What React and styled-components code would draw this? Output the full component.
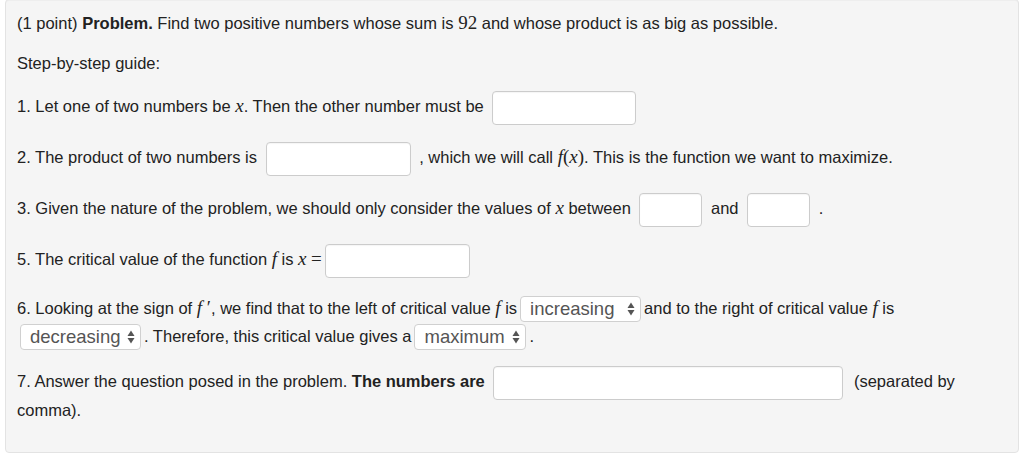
import styled, { createGlobalStyle } from 'styled-components';

const GlobalStyle = createGlobalStyle`
  body {
    margin: 0;
    background: #ffffff;
    font-family: "Liberation Sans", Arial, sans-serif;
    font-size: 16.5px;
    color: #222222;
  }
`;

const Page = styled.div`
  padding: 0 5px 0 5px;
`;

const Panel = styled.div`
  margin-top: -1px;
  padding: 13px 12px 13px 11px;
  background: #f5f5f5;
  border: 1px solid #e3e3e3;
  border-radius: 4px;
  box-shadow: inset 0 1px 1px rgba(0, 0, 0, 0.03);
`;

const Para = styled.p`
  margin: 0 0 ${props => props.$gap || 17}px;
  line-height: 20px;

  &:last-child {
    margin-bottom: 19px;
  }
`;

const Mathv = styled.span`
  font-family: "Liberation Serif", "Times New Roman", serif;
  font-style: ${props => (props.$upright ? 'normal' : 'italic')};
  font-size: 19px;
  line-height: 1;
`;

const Answer = styled.input`
  box-sizing: border-box;
  width: ${props => props.$w}px;
  height: 34px;
  margin: 0 ${props => (props.$mr === undefined ? 4 : props.$mr)}px 0
    ${props => (props.$ml === undefined ? 4 : props.$ml)}px;
  padding: 6px 12px;
  vertical-align: middle;
  background: #ffffff;
  border: 1px solid #cccccc;
  border-radius: 4px;
  font: inherit;
  box-shadow: inset 0 1px 1px rgba(0, 0, 0, 0.04);
`;

const SelectWrap = styled.span`
  position: relative;
  display: inline-block;
  vertical-align: middle;
  margin: 0 3px;
`;

const Select = styled.select`
  appearance: none;
  -webkit-appearance: none;
  box-sizing: border-box;
  width: ${props => props.$w}px;
  height: 26px;
  padding: 0 12px 0 9px;
  background: #ffffff;
  border: 1px solid #d0d0d0;
  border-radius: 4px;
  font-family: "Liberation Sans", Arial, sans-serif;
  font-size: 18.5px;
  color: #555555;
  line-height: 24px;
`;

const Arrows = styled.svg`
  position: absolute;
  right: 6px;
  top: 6px;
  pointer-events: none;
`;

const Dropdown = ({ w, value, options }) => (
  <SelectWrap>
    <Select $w={w} defaultValue={value}>
      {options.map(o => (
        <option key={o}>{o}</option>
      ))}
    </Select>
    <Arrows width="8" height="14" viewBox="0 0 8 14">
      <path d="M4 0.5 L7.5 6 L0.5 6 Z" fill="#555555" />
      <path d="M4 13.5 L7.5 8 L0.5 8 Z" fill="#555555" />
    </Arrows>
  </SelectWrap>
);

const TightLine = styled.span`
  line-height: 27px;
`;

export default function App() {
  return (
    <>
      <GlobalStyle />
      <Page>
        <Panel>
          <Para $gap={20}>
            (1 point) <b>Problem.</b> Find two positive numbers whose sum is{' '}
            <Mathv $upright>92</Mathv> and whose product is as big as possible.
          </Para>
          <Para $gap={18}>Step-by-step guide:</Para>
          <Para>
            1. Let one of two numbers be <Mathv>x</Mathv>. Then the other number must be{' '}
            <Answer $w={144} />
          </Para>
          <Para>
            2. The product of two numbers is <Answer $w={145} /> , which we will call{' '}
            <Mathv>f</Mathv>
            <Mathv $upright>(</Mathv>
            <Mathv>x</Mathv>
            <Mathv $upright>)</Mathv>. This is the function we want to maximize.
          </Para>
          <Para>
            3. Given the nature of the problem, we should only consider the values of{' '}
            <Mathv>x</Mathv> between <Answer $w={63} /> and <Answer $w={63} /> .
          </Para>
          <Para>
            5. The critical value of the function <Mathv>f</Mathv> is <Mathv>x</Mathv>{' '}
            <Mathv $upright>=</Mathv>
            <Answer $w={145} $ml={3} />
          </Para>
          <Para $gap={15}>
            <TightLine>
              6. Looking at the sign of <Mathv>f</Mathv>
              <Mathv $upright> ′</Mathv>, we find that to the left of critical value{' '}
              <Mathv>f</Mathv> is
              <Dropdown w={121} value="increasing" options={['?', 'increasing', 'decreasing']} />
              and to the right of critical value <Mathv>f</Mathv> is{' '}
              <Dropdown w={121} value="decreasing" options={['?', 'increasing', 'decreasing']} />
              . Therefore, this critical value gives a
              <Dropdown w={112} value="maximum" options={['?', 'maximum', 'minimum']} />.
            </TightLine>
          </Para>
          <Para>
            7. Answer the question posed in the problem. <b>The numbers are</b>{' '}
            <Answer $w={350} $mr={6} /> (separated by comma).
          </Para>
        </Panel>
      </Page>
    </>
  );
}
